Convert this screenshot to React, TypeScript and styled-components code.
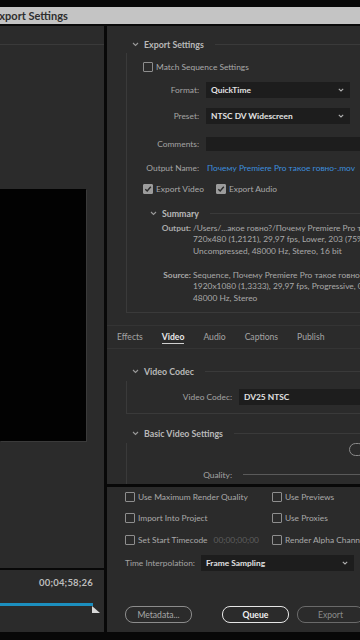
import React from 'react';
import styled, { createGlobalStyle } from 'styled-components';

const GlobalStyle = createGlobalStyle`
    html, body {
        margin: 0;
        padding: 0;
        background: #080808;
    }
    * {
        box-sizing: border-box;
    }
`;

const Screen = styled.div`
    width: 360px;
    height: 640px;
    overflow: hidden;
    display: flex;
    flex-direction: column;
    background: #080808;
    font-family: Lato, "Open Sans", sans-serif;
    font-size: 8.4px;
    color: #a9a9a9;
`;

const TitleBar = styled.div`
    margin-top: 7px;
    height: 19px;
    flex-shrink: 0;
    background: #c4c4c4;
    border-bottom: 2px solid #0a0a0a;
    display: flex;
    align-items: center;
    overflow: hidden;
`;

const TitleText = styled.span`
    margin-left: -7px;
    font-size: 11px;
    font-weight: 700;
    color: #2e2e2e;
    white-space: nowrap;
`;

const Body = styled.div`
    display: flex;
    gap: 3px;
    height: 606px;
    flex-shrink: 0;
`;

const LeftColumn = styled.div`
    width: 104px;
    flex-shrink: 0;
    display: flex;
    flex-direction: column;
    gap: 2px;
`;

const MonitorPane = styled.div`
    flex: 1;
    background: #2b2b2b;
    display: flex;
    flex-direction: column;
`;

const MonitorHeader = styled.div`
    height: 19px;
    border-bottom: 1px solid #3a3a3a;
`;

const VideoFrame = styled.div`
    margin-top: 144px;
    width: 86px;
    height: 252px;
    background: #020202;
    box-shadow: 1px 1px 0 #3a3a3a;
`;

const TimelinePane = styled.div`
    flex: none;
    height: 62px;
    background: #2b2b2b;
    display: flex;
    flex-direction: column;
    padding-top: 7px;
`;

const Timecode = styled.div`
    width: 93px;
    text-align: right;
    color: #bdbdbd;
    font-size: 9.5px;
    font-weight: 700;
    letter-spacing: 0.2px;
`;

const Track = styled.div`
    position: relative;
    margin-top: 15px;
    width: 93px;
    height: 3px;
    background: #1c8fbf;
`;

const PlayMarker = styled.svg`
    position: absolute;
    right: -8px;
    top: 3px;
`;

const RightColumn = styled.div`
    flex: 1;
    display: flex;
    flex-direction: column;
    gap: 3px;
    min-width: 0;
`;

const SettingsPane = styled.div`
    flex: none;
    height: 458px;
    background: #2b2b2b;
    overflow: hidden;
    padding-top: 9px;
`;

const OutputPane = styled.div`
    flex: 1;
    min-height: 0;
    background: #2b2b2b;
    padding: 0 0 0 18px;
`;

const SectionHeader = styled.div<{ $indent: number }>`
    display: flex;
    align-items: center;
    height: 18px;
    padding-left: ${p => p.$indent}px;
    gap: 5px;
    color: #b9b9b9;
    font-size: 8.8px;
    font-weight: 700;
    white-space: nowrap;

    &::after {
        content: "";
        flex: 1;
        height: 1px;
        margin-left: 6px;
        background: #3a3a3a;
    }
`;

const SectionBox = styled.div<{ $top: number; $pad: number; $bottom?: boolean }>`
    margin-left: 19px;
    border-left: 1px solid #3a3a3a;
    border-bottom: ${p => (p.$bottom ? '1px solid #3a3a3a' : 'none')};
    padding-top: ${p => p.$top}px;
    padding-bottom: ${p => p.$pad}px;
`;

const CheckRow = styled.div<{ $h: number; $indent: number }>`
    display: flex;
    align-items: center;
    height: ${p => p.$h}px;
    padding-left: ${p => p.$indent}px;
    gap: 12px;
    white-space: nowrap;
`;

const CheckLabel = styled.label`
    display: flex;
    align-items: center;
    gap: 3px;
    color: #a9a9a9;
`;

const Box = styled.span<{ $checked?: boolean }>`
    width: 10px;
    height: 10px;
    border: 1px solid ${p => (p.$checked ? '#9c9c9c' : '#8e8e8e')};
    border-radius: 1px;
    background: ${p => (p.$checked ? '#9c9c9c' : 'transparent')};
    display: flex;
    align-items: center;
    justify-content: center;
    flex-shrink: 0;
`;

const FieldRow = styled.div<{ $h: number; $label: number }>`
    display: grid;
    grid-template-columns: ${p => p.$label}px 1fr;
    column-gap: 7px;
    align-items: center;
    height: ${p => p.$h}px;
    white-space: nowrap;
`;

const FieldLabel = styled.span`
    text-align: right;
    color: #a4a4a4;
`;

const Select = styled.div<{ $w?: number }>`
    display: flex;
    align-items: center;
    justify-content: space-between;
    height: 16px;
    width: ${p => (p.$w ? `${p.$w}px` : 'auto')};
    padding: 0 6px 0 5px;
    background: #1d1d1d;
    color: #e2e2e2;
    font-weight: 700;
    white-space: nowrap;
    overflow: hidden;
`;

const TextInput = styled.div`
    height: 14px;
    background: #1d1d1d;
`;

const LinkText = styled.span`
    color: #3d8ede;
    margin-left: 1px;
`;

const Summary = styled.div`
    display: flex;
    flex-direction: column;
    gap: 12.5px;
    padding-top: 1px;
`;

const SummaryItem = styled.div`
    display: grid;
    grid-template-columns: 64px 1fr;
    column-gap: 2px;
    line-height: 11.4px;
    white-space: nowrap;
`;

const SummaryKey = styled.span`
    text-align: right;
    font-weight: 700;
    color: #a9a9a9;
`;

const SummaryValue = styled.span`
    color: #a9a9a9;
`;

const Tabs = styled.div`
    margin-top: 12px;
    height: 24px;
    border-top: 1px solid #343434;
    border-bottom: 1px solid #343434;
    display: flex;
    align-items: center;
    gap: 19px;
    padding-left: 10px;
`;

const Tab = styled.span<{ $active?: boolean }>`
    position: relative;
    font-size: 8.6px;
    color: ${p => (p.$active ? '#e8e8e8' : '#a4a4a4')};
    font-weight: ${p => (p.$active ? 700 : 400)};

    &::after {
        content: "";
        display: ${p => (p.$active ? 'block' : 'none')};
        position: absolute;
        left: 0;
        right: 0;
        bottom: -2px;
        height: 1px;
        background: #d0d0d0;
    }
`;

const RoundButton = styled.div`
    width: 16px;
    height: 13px;
    margin-left: auto;
    margin-right: -5px;
    border: 1px solid #8a8a8a;
    border-radius: 7px;
`;

const ButtonStrip = styled.div`
    display: flex;
    height: 13px;
    align-items: center;
`;

const Slider = styled.div`
    height: 1px;
    background: #5a5a5a;
    margin-left: 4px;
`;

const ButtonRow = styled.div`
    display: flex;
    margin-top: 31px;
`;

const Pill = styled.button<{ $kind: 'normal' | 'primary' | 'disabled' }>`
    height: 17px;
    width: 67px;
    border-radius: 8px;
    background: transparent;
    font-family: inherit;
    font-size: 8.6px;
    padding: 0;
    border: 1px solid ${p => (p.$kind === 'primary' ? '#e6e6e6' : p.$kind === 'disabled' ? '#6a6a6a' : '#8c8c8c')};
    color: ${p => (p.$kind === 'primary' ? '#f2f2f2' : p.$kind === 'disabled' ? '#8a8a8a' : '#a8a8a8')};
    font-weight: ${p => (p.$kind === 'primary' ? 700 : 400)};
    margin-left: ${p => (p.$kind === 'primary' ? 30 : p.$kind === 'disabled' ? 8 : 0)}px;
    flex-shrink: 0;
`;

const Dim = styled.span`
    color: #5e5e5e;
    margin-left: 3px;
`;

const OutCheckGrid = styled.div`
    display: grid;
    grid-template-columns: 147px 1fr;
    grid-template-rows: 20px 22px 22px;
    align-items: center;
    white-space: nowrap;
`;

const InterpRow = styled.div`
    display: flex;
    align-items: center;
    gap: 6px;
    height: 24px;
    white-space: nowrap;
`;

const Chevron = () => (
    <svg width="7" height="5" viewBox="0 0 7 5">
        <polyline points="1,1 3.5,3.5 6,1" fill="none" stroke="#9a9a9a" strokeWidth="1.1" />
    </svg>
);

const DropArrow = () => (
    <svg width="6" height="4" viewBox="0 0 6 4">
        <polyline points="0.8,0.8 3,3 5.2,0.8" fill="none" stroke="#b0b0b0" strokeWidth="1.1" />
    </svg>
);

const Check = ({ checked }: { checked?: boolean }) => (
    <Box $checked={checked}>
        {checked && (
            <svg width="8" height="8" viewBox="0 0 8 8">
                <polyline points="1.3,4.2 3.2,6 6.8,1.8" fill="none" stroke="#2b2b2b" strokeWidth="1.4" />
            </svg>
        )}
    </Box>
);

export default function App() {
    return (
        <Screen>
            <GlobalStyle />
            <TitleBar>
                <TitleText>Export Settings</TitleText>
            </TitleBar>
            <Body>
                <LeftColumn>
                    <MonitorPane>
                        <MonitorHeader />
                        <VideoFrame />
                    </MonitorPane>
                    <TimelinePane>
                        <Timecode>00;04;58;26</Timecode>
                        <Track>
                            <PlayMarker width="9" height="8" viewBox="0 0 9 8">
                                <polygon points="0,0 8,7 0,7" fill="#d8d8d8" />
                            </PlayMarker>
                        </Track>
                    </TimelinePane>
                </LeftColumn>

                <RightColumn>
                    <SettingsPane>
                        <SectionHeader $indent={25}>
                            <Chevron />
                            Export Settings
                        </SectionHeader>
                        <SectionBox $top={4} $pad={8} $bottom>
                            <CheckRow $h={20} $indent={16}>
                                <CheckLabel><Check />Match Sequence Settings</CheckLabel>
                            </CheckRow>
                            <FieldRow $h={26} $label={72}>
                                <FieldLabel>Format:</FieldLabel>
                                <Select $w={144}>QuickTime<DropArrow /></Select>
                            </FieldRow>
                            <FieldRow $h={26} $label={72}>
                                <FieldLabel>Preset:</FieldLabel>
                                <Select $w={144}>NTSC DV Widescreen<DropArrow /></Select>
                            </FieldRow>
                            <FieldRow $h={26} $label={72} style={{ marginTop: 2 }}>
                                <FieldLabel>Comments:</FieldLabel>
                                <TextInput />
                            </FieldRow>
                            <FieldRow $h={22} $label={72}>
                                <FieldLabel>Output Name:</FieldLabel>
                                <LinkText>Почему Premiere Pro такое говно-.mov</LinkText>
                            </FieldRow>
                            <CheckRow $h={20} $indent={16}>
                                <CheckLabel><Check checked />Export Video</CheckLabel>
                                <CheckLabel><Check checked />Export Audio</CheckLabel>
                            </CheckRow>
                            <SectionHeader $indent={23} style={{ marginTop: 5 }}>
                                <Chevron />
                                Summary
                            </SectionHeader>
                            <Summary>
                                <SummaryItem>
                                    <SummaryKey>Output:</SummaryKey>
                                    <SummaryValue>
                                        /Users/...акое говно?/Почему Premiere Pro такое говно-.mov<br />
                                        720x480 (1,2121), 29,97 fps, Lower, 203 (75% quality)<br />
                                        Uncompressed, 48000 Hz, Stereo, 16 bit
                                    </SummaryValue>
                                </SummaryItem>
                                <SummaryItem>
                                    <SummaryKey>Source:</SummaryKey>
                                    <SummaryValue>
                                        Sequence, Почему Premiere Pro такое говно?<br />
                                        1920x1080 (1,3333), 29,97 fps, Progressive, 00;04;58;26<br />
                                        48000 Hz, Stereo
                                    </SummaryValue>
                                </SummaryItem>
                            </Summary>
                        </SectionBox>

                        <Tabs>
                            <Tab>Effects</Tab>
                            <Tab $active>Video</Tab>
                            <Tab>Audio</Tab>
                            <Tab>Captions</Tab>
                            <Tab>Publish</Tab>
                        </Tabs>

                        <SectionHeader $indent={25} style={{ marginTop: 14 }}>
                            <Chevron />
                            Video Codec
                        </SectionHeader>
                        <SectionBox $top={4} $pad={4} $bottom>
                            <FieldRow $h={24} $label={105}>
                                <FieldLabel>Video Codec:</FieldLabel>
                                <Select>DV25 NTSC</Select>
                            </FieldRow>
                        </SectionBox>

                        <SectionHeader $indent={25} style={{ marginTop: 11 }}>
                            <Chevron />
                            Basic Video Settings
                        </SectionHeader>
                        <SectionBox $top={0} $pad={10}>
                            <ButtonStrip>
                                <RoundButton />
                            </ButtonStrip>
                            <FieldRow $h={22} $label={105} style={{ marginTop: 8 }}>
                                <FieldLabel>Quality:</FieldLabel>
                                <Slider />
                            </FieldRow>
                        </SectionBox>
                    </SettingsPane>

                    <OutputPane>
                        <OutCheckGrid>
                            <CheckLabel><Check />Use Maximum Render Quality</CheckLabel>
                            <CheckLabel><Check />Use Previews</CheckLabel>
                            <CheckLabel><Check />Import Into Project</CheckLabel>
                            <CheckLabel><Check />Use Proxies</CheckLabel>
                            <CheckLabel><Check />Set Start Timecode<Dim>00;00;00;00</Dim></CheckLabel>
                            <CheckLabel><Check />Render Alpha Channel Only</CheckLabel>
                        </OutCheckGrid>
                        <InterpRow>
                            <FieldLabel>Time Interpolation:</FieldLabel>
                            <Select $w={153}>Frame Sampling<DropArrow /></Select>
                        </InterpRow>
                        <ButtonRow>
                            <Pill $kind="normal">Metadata...</Pill>
                            <Pill $kind="primary">Queue</Pill>
                            <Pill $kind="disabled">Export</Pill>
                        </ButtonRow>
                    </OutputPane>
                </RightColumn>
            </Body>
        </Screen>
    );
}
